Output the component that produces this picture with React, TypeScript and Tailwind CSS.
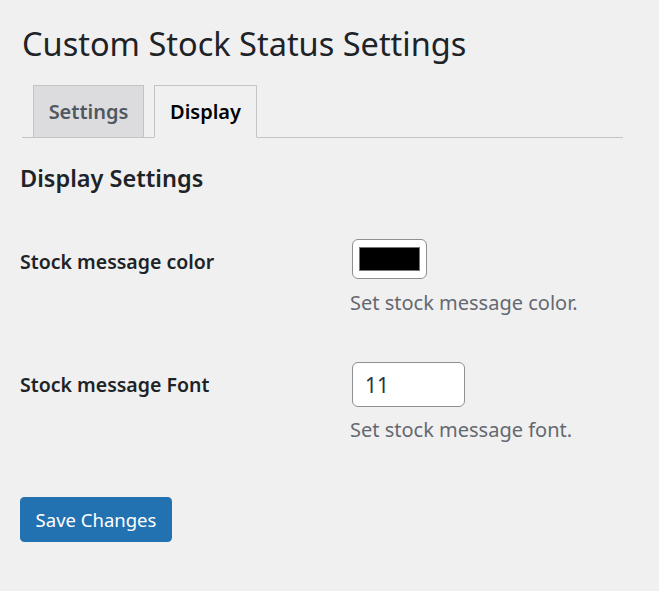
import React, { useState } from 'react';

const font = { fontFamily: '"Noto Sans", "Open Sans", Arial, sans-serif' };

const App: React.FC = () => {
  const [tab, setTab] = useState<'settings' | 'display'>('display');
  const [fontSize, setFontSize] = useState('11');

  return (
    <div className="min-h-[591px] bg-[#f0f0f1] text-[#1d2327] pt-[21px] px-[20px]" style={font}>
      <h1 className="ml-[2px] text-[32.5px] leading-[45px] font-normal">Custom Stock Status Settings</h1>

      {/* tabs */}
      <div className="mt-[19px] ml-[2px] w-[601px] flex border-b border-[#c3c4c7] pl-[11px]">
        <button
          type="button"
          onClick={() => setTab('settings')}
          className={`w-[111px] -mb-px border border-[#c3c4c7] text-[20px] leading-[36px] pt-[8px] pb-[7px] font-semibold ${
            tab === 'settings' ? 'bg-[#f0f0f1] border-b-[#f0f0f1] text-black' : 'bg-[#dcdcde] text-[#50575e]'
          }`}
        >
          Settings
        </button>
        <button
          type="button"
          onClick={() => setTab('display')}
          className={`ml-[10px] w-[103px] -mb-px border border-[#c3c4c7] text-[20px] leading-[36px] pt-[8px] pb-[7px] font-semibold ${
            tab === 'display' ? 'bg-[#f0f0f1] border-b-[#f0f0f1] text-black' : 'bg-[#dcdcde] text-[#50575e]'
          }`}
        >
          Display
        </button>
      </div>

      <h2 className="mt-[24px] text-[23.5px] leading-[33px] font-semibold">Display Settings</h2>

      <div className="mt-[44px] flex flex-col gap-[45px]">
        <div className="flex">
          <div className="w-[332px] pt-[9px] text-[19.5px] leading-[27px] font-semibold">Stock message color</div>
          <div>
            <div className="w-[75px] h-[40px] bg-white border border-[#8c8f94] rounded-[6px] px-[6px] py-[7px]">
              <div className="w-full h-full bg-black border border-[#767676]" />
            </div>
            <p className="mt-[9px] text-[20px] leading-[29px] text-[#646970] -ml-[2px]">Set stock message color.</p>
          </div>
        </div>

        <div className="flex">
          <div className="w-[332px] pt-[9px] text-[19.5px] leading-[27px] font-semibold">Stock message Font</div>
          <div>
            <input
              type="text"
              value={fontSize}
              onChange={(e) => setFontSize(e.target.value)}
              className="block w-[113px] h-[45px] bg-white border border-[#8c8f94] rounded-[6px] px-[12px] text-[21px] text-[#2c3338] outline-none"
              style={font}
            />
            <p className="mt-[8px] text-[20px] leading-[29px] text-[#646970] -ml-[2px]">Set stock message font.</p>
          </div>
        </div>
      </div>

      <button
        type="submit"
        className="mt-[53px] w-[152px] h-[45px] bg-[#2271b1] rounded-[4.5px] text-white text-[18.5px]"
      >
        Save Changes
      </button>
    </div>
  );
};

export default App;
